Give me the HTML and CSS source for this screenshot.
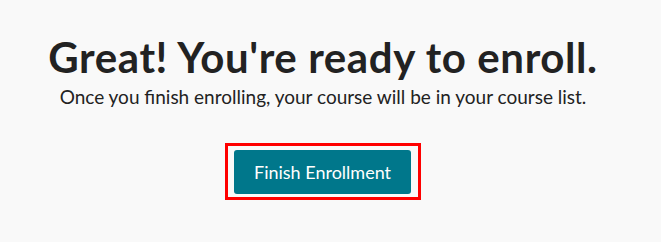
FILE: index.html
```html
<!DOCTYPE html>
<html lang="en">
<head>
    <meta charset="UTF-8">
    <meta name="viewport" content="width=device-width, initial-scale=1.0">
    <title>Ready to enroll</title>
    <link rel="stylesheet" href="styles.css">
</head>
<body>
    <main class="enroll">
        <h1 class="enroll-title">Great! You're ready to enroll.</h1>
        <p class="enroll-text">Once you finish enrolling, your course will be in your course list.</p>

        <div class="enroll-action">
            <button class="btn-finish" type="button">Finish Enrollment</button>
        </div>
    </main>
</body>
</html>
```

FILE: styles.css
```css
:root {
    --bg: #f9f9f9;
    --text: #222;
    --teal: #00778b;
    --mark: #ff0000;
}

* {
    box-sizing: border-box;
    margin: 0;
    padding: 0;
}

body {
    background: var(--bg);
    color: var(--text);
    font-family: Lato, 'Liberation Sans', Arial, sans-serif;
    min-height: 100vh;
}

.enroll {
    width: 646px;
    padding-top: 33px;
    display: flex;
    flex-direction: column;
    align-items: center;
    text-align: center;
}

.enroll-title {
    font-size: 42px;
    line-height: 48px;
    font-weight: 700;
    letter-spacing: 0.6px;
}

.enroll-text {
    margin-top: 5px;
    font-size: 19px;
    line-height: 22px;
}

.enroll-action {
    margin-top: 35px;
    border: 3px solid var(--mark);
    padding: 4px 7px 3px 6px;
}

.btn-finish {
    display: block;
    width: 177px;
    height: 44px;
    background: var(--teal);
    color: #fff;
    border: none;
    border-radius: 3px;
    font-family: inherit;
    font-size: 18px;
    cursor: pointer;
}
```
